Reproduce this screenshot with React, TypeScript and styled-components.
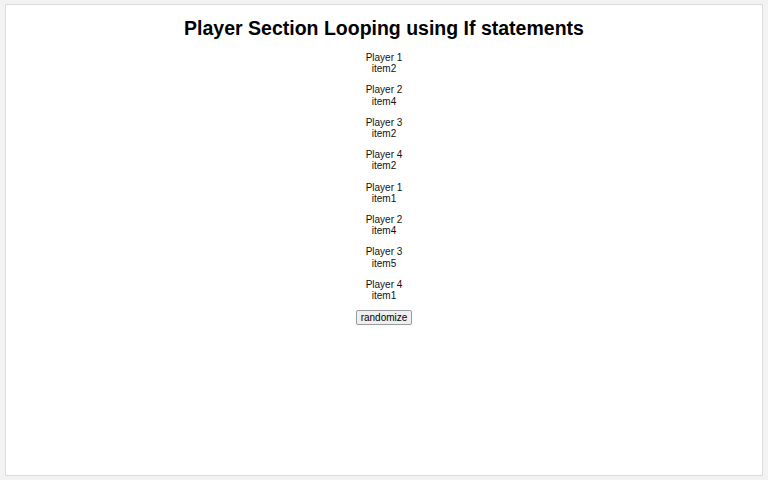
import styled, { createGlobalStyle } from 'styled-components';

const GlobalStyle = createGlobalStyle`
  html, body {
    margin: 0;
    padding: 0;
    background: #f3f3f3;
    font-family: 'Liberation Sans', Arial, sans-serif;
  }
`;

const Page = styled.div`
  padding: 4px 5px 4px 5px;
`;

const Panel = styled.div`
  background: #ffffff;
  border: 1px solid #dcdcdc;
  height: 472px;
  box-sizing: border-box;
  display: flex;
  flex-direction: column;
  align-items: center;
  padding-top: 12px;
`;

const Title = styled.h1`
  font-size: 19.5px;
  font-weight: 700;
  color: #000;
  margin: 0 0 13px;
  line-height: 22px;
`;

const PlayerList = styled.div`
  display: flex;
  flex-direction: column;
  align-items: center;
  gap: 10px;
`;

const PlayerBlock = styled.div`
  font-size: 10px;
  line-height: 11.2px;
  color: #111;
  text-align: center;
`;

const RandomButton = styled.button`
  margin-top: 9px;
  font-family: 'Liberation Sans', Arial, sans-serif;
  font-size: 10px;
  line-height: 11px;
  padding: 1px 4px;
  background: #efefef;
  border: 1px solid #9a9a9a;
  border-radius: 2px;
  color: #000;
`;

const players = [
  { name: 'Player 1', item: 'item2' },
  { name: 'Player 2', item: 'item4' },
  { name: 'Player 3', item: 'item2' },
  { name: 'Player 4', item: 'item2' },
  { name: 'Player 1', item: 'item1' },
  { name: 'Player 2', item: 'item4' },
  { name: 'Player 3', item: 'item5' },
  { name: 'Player 4', item: 'item1' },
];

export default function App() {
  return (
    <>
      <GlobalStyle />
      <Page>
        <Panel>
          <Title>Player Section Looping using If statements</Title>
          <PlayerList>
            {players.map((p, i) => (
              <PlayerBlock key={i}>
                <div>{p.name}</div>
                <div>{p.item}</div>
              </PlayerBlock>
            ))}
          </PlayerList>
          <RandomButton>randomize</RandomButton>
        </Panel>
      </Page>
    </>
  );
}
